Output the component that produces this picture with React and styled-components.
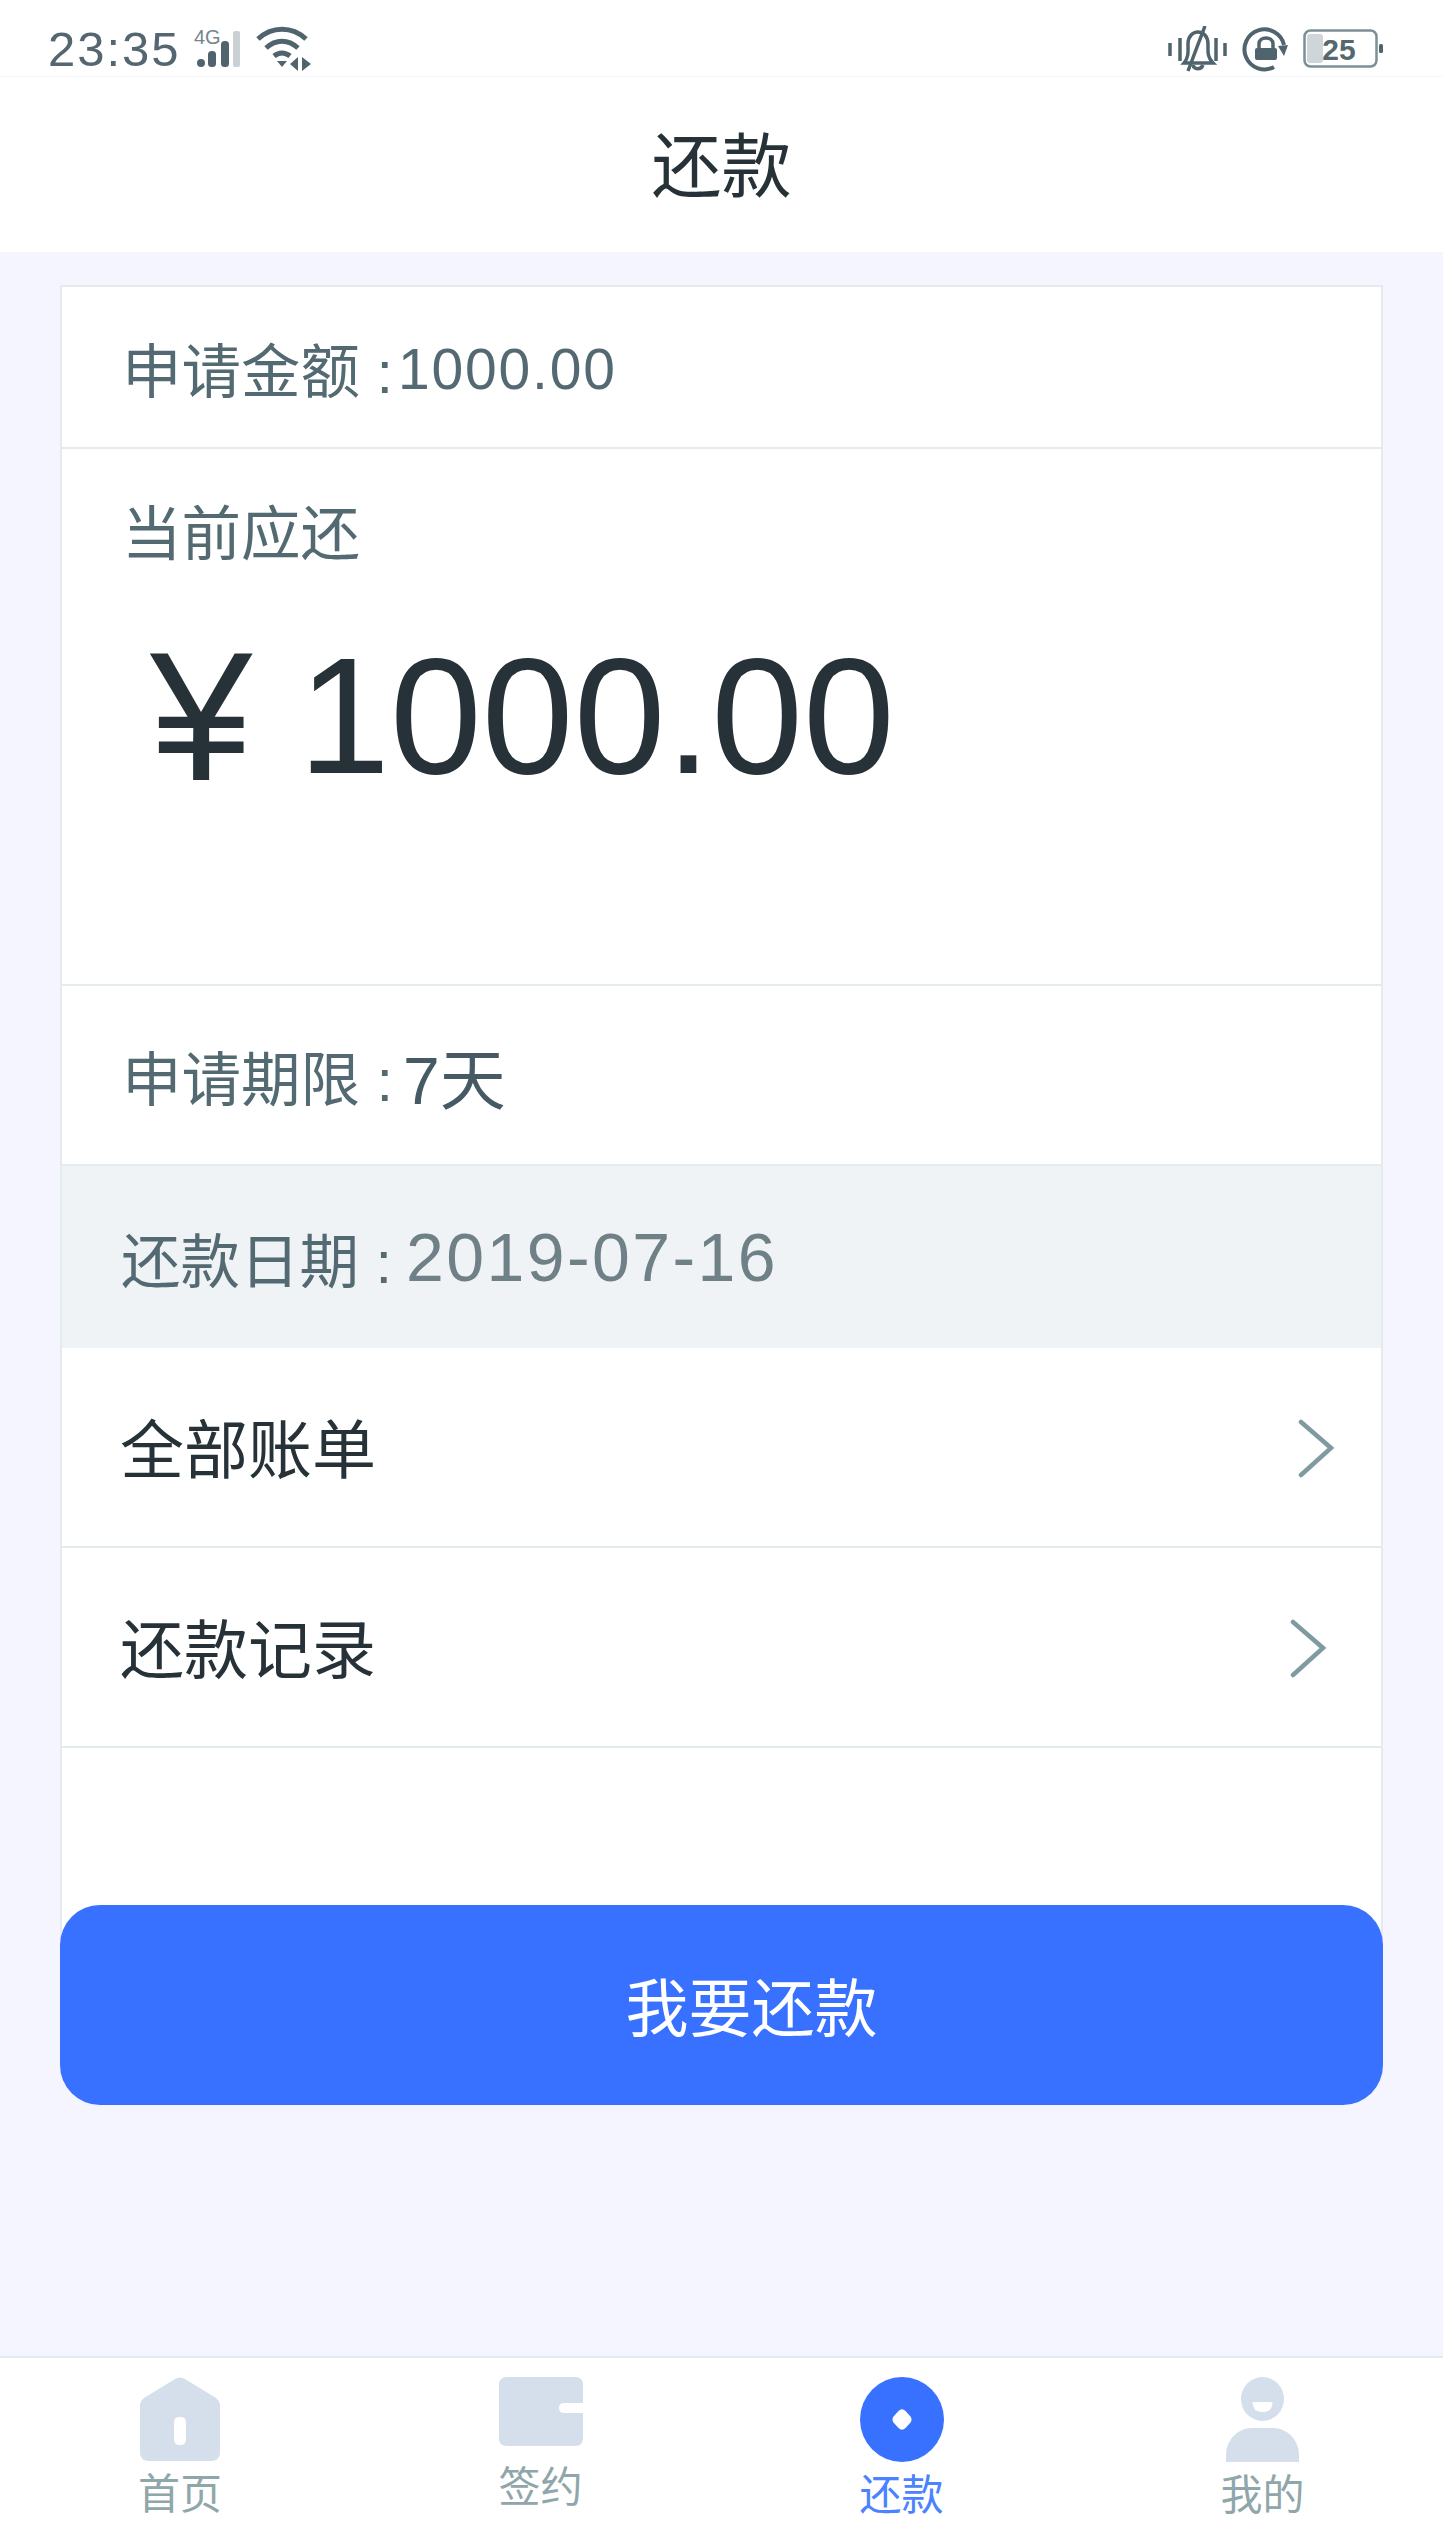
import styled, { createGlobalStyle } from 'styled-components';

const GlobalStyle = createGlobalStyle`
	html, body {
		margin: 0;
		padding: 0;
		background: #f4f5ff;
	}
	* {
		box-sizing: border-box;
	}
`;

const font = `"Liberation Sans", "Noto Sans CJK SC", sans-serif`;

export default function App(){
	return(
		<Page>
			<GlobalStyle />
			<StatusBar>
				<StatusLeft>
					<Clock>23:35</Clock>
					<SignalIcon />
					<WifiIcon />
				</StatusLeft>
				<StatusRight>
					<BellIcon />
					<LockIcon />
					<BatteryIcon />
				</StatusRight>
			</StatusBar>
			<Header>还款</Header>
			<Main>
				<Card>
					<AmountRow>
						<Label>申请金额 :</Label>
						<SmallValue>1000.00</SmallValue>
					</AmountRow>
					<DueRow>
						<Label>当前应还</Label>
						<DueAmount>
							<Yen>¥</Yen>
							<BigValue>1000.00</BigValue>
						</DueAmount>
					</DueRow>
					<TermRow>
						<Label>申请期限 :</Label>
						<TermValue>7天</TermValue>
					</TermRow>
					<DateRow>
						<Label>还款日期 :</Label>
						<DateValue>2019-07-16</DateValue>
					</DateRow>
					<LinkRow>
						<LinkText>全部账单</LinkText>
						<Chevron />
					</LinkRow>
					<LinkRow $inset>
						<LinkText>还款记录</LinkText>
						<Chevron />
					</LinkRow>
					<CardSpace />
				</Card>
				<PayButton>我要还款</PayButton>
			</Main>
			<TabBar>
				<Tab>
					<HomeIcon />
					<TabLabel>首页</TabLabel>
				</Tab>
				<Tab>
					<WalletIcon />
					<TabLabel $wallet>签约</TabLabel>
				</Tab>
				<Tab>
					<CoinIcon />
					<TabLabel $active>还款</TabLabel>
				</Tab>
				<Tab>
					<UserIcon />
					<TabLabel>我的</TabLabel>
				</Tab>
			</TabBar>
		</Page>
	)
}

const SignalIcon = () => (
	<svg width="50" height="44" viewBox="0 0 50 44">
		<text x="1" y="17" fontSize="20" fontFamily="Liberation Sans" fill="#74868e">4G</text>
		<circle cx="8" cy="36" r="4" fill="#50646e" />
		<rect x="15" y="24" width="8" height="16" rx="3.5" fill="#50646e" />
		<rect x="28" y="14" width="8" height="26" rx="3.5" fill="#50646e" />
		<rect x="40" y="4" width="7" height="36" rx="2" fill="#c9d1d4" />
	</svg>
);

const WifiIcon = () => (
	<svg width="60" height="46" viewBox="0 0 60 46" fill="none" stroke="#50646e" strokeWidth="5">
		<path d="M3 13 C17 0 37 0 51 13" />
		<path d="M11 22 C21 13 33 13 43 22" />
		<path d="M19 30 C24 26 30 26 35 30" />
		<path d="M22 35 H32 L27 41 Z" fill="#50646e" stroke="none" />
		<path d="M43 31 V45 L35 38 Z M47 31 V45 L56 38 Z" fill="#50646e" stroke="none" />
	</svg>
);

const BellIcon = () => (
	<svg width="60" height="46" viewBox="0 0 60 46" fill="none" stroke="#50646e" strokeWidth="3.5">
		<path d="M3 17 V30 M13 12 V35 M49 12 V35 M58 17 V30" />
		<path d="M17 37 C22 31 21 25 21 18 C21 2 41 2 41 18 C41 25 40 31 46 37 Z" />
		<path d="M26 39 C27 44 34 44 36 39" />
		<path d="M38 0 L21 45" />
	</svg>
);

const LockIcon = () => (
	<svg width="46" height="46" viewBox="0 0 46 46">
		<path d="M32 41 A20 20 0 1 1 42 19" fill="none" stroke="#50646e" strokeWidth="4" />
		<path d="M36 20 L46 19 L42 30 Z" fill="#50646e" />
		<rect x="13" y="22" width="22" height="12" rx="2" fill="#50646e" />
		<path d="M17 22 V18 C17 10 31 10 31 18 V22" fill="none" stroke="#50646e" strokeWidth="3.5" />
	</svg>
);

const BatteryIcon = () => (
	<svg width="80" height="40" viewBox="0 0 80 40">
		<rect x="1.5" y="1.5" width="72" height="36" rx="6" fill="#fff" stroke="#7d8f97" strokeWidth="2.5" />
		<rect x="4" y="5" width="16" height="29" rx="3" fill="#cfd6d9" />
		<text x="36" y="31" fontSize="30" fontWeight="700" textAnchor="middle" fontFamily="Liberation Sans" fill="#56686f">25</text>
		<rect x="76" y="15" width="4" height="9" rx="1.5" fill="#50646e" />
	</svg>
);

const Chevron = () => (
	<ChevronSvg width="36" height="60" viewBox="0 0 36 60" fill="none" stroke="#7f9ba1" strokeWidth="4.5" strokeLinecap="round">
		<path d="M3 3 L33 29 L3 56" />
	</ChevronSvg>
);

const HomeIcon = () => (
	<svg width="80" height="84" viewBox="0 0 80 84">
		<path fillRule="evenodd" fill="#d5dfec" d="M35 2 Q40 -1 45 2 L76 21 Q80 24 80 29 V75 Q80 84 71 84 H9 Q0 84 0 75 V29 Q0 24 4 21 Z M34 45 Q34 40 40 40 Q46 40 46 45 V63 Q46 68 40 68 Q34 68 34 63 Z" />
	</svg>
);

const WalletIcon = () => (
	<svg width="84" height="69" viewBox="0 0 84 69">
		<path fill="#d5dfec" d="M8 0 H76 Q84 0 84 8 V26 H65 Q60 26 60 31 Q60 36 65 36 H84 V61 Q84 69 76 69 H8 Q0 69 0 61 V8 Q0 0 8 0 Z" />
	</svg>
);

const CoinIcon = () => (
	<svg width="84" height="85" viewBox="0 0 84 85">
		<ellipse cx="42" cy="42.5" rx="42" ry="42.5" fill="#3870ff" />
		<path fill="#fff" d="M38.5 34 Q42 30.5 45.5 34 L50.5 39.5 Q52.5 42.5 50.5 45.5 L45.5 51 Q42 54.5 38.5 51 L33.5 45.5 Q31.5 42.5 33.5 39.5 Z" />
	</svg>
);

const UserIcon = () => (
	<svg width="73" height="85" viewBox="0 0 73 85">
		<ellipse cx="36.5" cy="22" rx="21.5" ry="22" fill="#d5dfec" />
		<path fill="#fff" d="M26.5 25 H46.5 Q46.5 35 36.5 35 Q26.5 35 26.5 25 Z" />
		<path fill="#d5dfec" d="M0 85 V78 C0 62 13 51 26 51 H47 C60 51 73 62 73 78 V85 Z" />
	</svg>
);

const Page = styled.div`
	width: 1443px;
	height: 2542px;
	display: flex;
	flex-direction: column;
	background: #f4f5ff;
	font-family: ${font};
	overflow: hidden;
`;

const StatusBar = styled.div`
	height: 77px;
	padding: 22px 60px 0 48px;
	display: flex;
	align-items: center;
	justify-content: space-between;
	background: #fff;
	border-bottom: 1px solid #f3f5fb;
`;

const StatusLeft = styled.div`
	display: flex;
	align-items: center;
	gap: 12px;
`;

const StatusRight = styled.div`
	display: flex;
	align-items: center;
	gap: 15px;
`;

const Clock = styled.span`
	font-size: 49px;
	letter-spacing: 2px;
	color: #546770;
`;

const Header = styled.div`
	height: 175px;
	display: flex;
	align-items: center;
	justify-content: center;
	padding-bottom: 6px;
	background: #fff;
	font-size: 70px;
	color: #263238;
`;

const Main = styled.main`
	flex: 1;
	padding: 33px 60px 0;
`;

const Card = styled.div`
	background: #fff;
	border: solid #e4ebee;
	border-width: 2px 2px 0;
`;

const AmountRow = styled.div`
	height: 162px;
	padding: 0 0 0 60px;
	display: flex;
	align-items: center;
	border-bottom: 2px solid #e4ebee;
`;

const DueRow = styled.div`
	height: 537px;
	padding: 37px 0 0 60px;
	border-bottom: 2px solid #e4ebee;
`;

const DueAmount = styled.div`
	display: flex;
	align-items: center;
	margin-top: 52px;
	padding-left: 28px;
`;

const TermRow = styled.div`
	height: 180px;
	padding-left: 60px;
	display: flex;
	align-items: center;
	border-bottom: 2px solid #e4ebee;
`;

const DateRow = styled.div`
	height: 182px;
	padding-left: 59px;
	display: flex;
	align-items: center;
	background: #f0f3f5;
	color: #6f8087;
`;

const LinkRow = styled.div`
	height: 200px;
	padding: 0 ${(p) => (p.$inset ? 55 : 47)}px 0 58px;
	display: flex;
	align-items: center;
	justify-content: space-between;
	border-bottom: 2px solid #e4ebee;
`;

const CardSpace = styled.div`
	height: 197px;
`;

const Label = styled.span`
	font-size: 59.5px;
	color: #546a73;
`;

const SmallValue = styled.span`
	font-size: 57px;
	letter-spacing: 1.8px;
	color: #546a73;
	margin: 4px 0 0 5px;
`;

const TermValue = styled.span`
	font-size: 66px;
	color: #455a64;
	margin-left: 10px;
`;

const DateValue = styled.span`
	font-size: 68px;
	letter-spacing: 2.4px;
	color: #6f8087;
	margin-left: 14px;
`;

const Yen = styled.span`
	font-size: 184px;
	line-height: 1;
	color: #263238;
`;

const BigValue = styled.span`
	font-size: 165px;
	line-height: 1;
	color: #263238;
	margin-left: 46px;
`;

const LinkText = styled.span`
	font-size: 64px;
	color: #263238;
	margin-top: -5px;
`;

const ChevronSvg = styled.svg`
	display: block;
	margin-top: 4px;
`;

const PayButton = styled.button`
	display: block;
	width: 100%;
	height: 200px;
	margin-top: -40px;
	padding: 0 0 4px 60px;
	border: 0;
	border-radius: 40px;
	background: #3870ff;
	color: #fff;
	font-family: ${font};
	font-size: 63px;
`;

const TabBar = styled.nav`
	height: 186px;
	display: grid;
	grid-template-columns: 360px 361px 361px 361px;
	background: #fff;
	border-top: 2px solid #e4ebee;
`;

const Tab = styled.div`
	display: flex;
	flex-direction: column;
	align-items: center;
	padding-top: 19px;
	svg {
		display: block;
	}
`;

const TabLabel = styled.span`
	font-size: 42px;
	line-height: 52px;
	margin-top: ${(p) => (p.$wallet ? 16 : 8)}px;
	color: ${(p) => (p.$active ? '#4a82ff' : '#8fa6aa')};
`;
